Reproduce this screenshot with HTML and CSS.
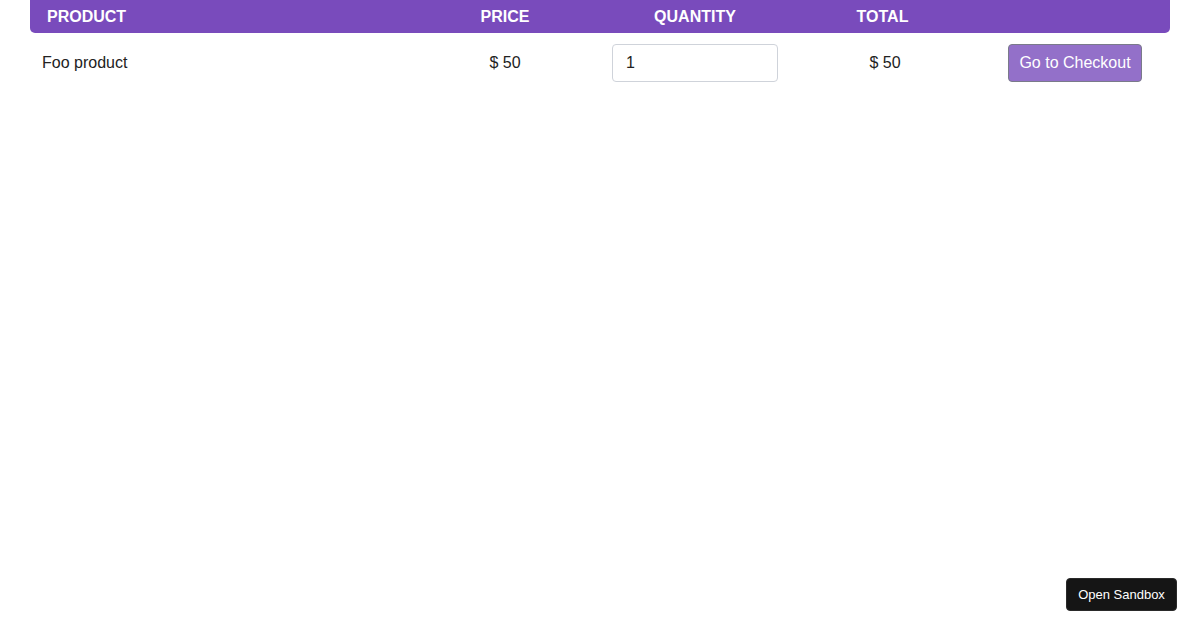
FILE: index.html
```html
<!DOCTYPE html>
<html>
<head>
<meta charset="utf-8">
<link rel="stylesheet" href="styles.css">
</head>
<body>
<div class="cart">
  <div class="head">
    <div class="h-product">PRODUCT</div>
    <div class="h-center">PRICE</div>
    <div class="h-center">QUANTITY</div>
    <div class="h-center h-total">TOTAL</div>
    <div class="h-center"></div>
  </div>
  <div class="row">
    <div class="c-product">Foo product</div>
    <div class="c-center">$ 50</div>
    <div class="c-qty"><input class="qty" type="text" value="1"></div>
    <div class="c-center">$ 50</div>
    <div class="c-center"><button class="checkout">Go to Checkout</button></div>
  </div>
</div>
<button class="sandbox">Open Sandbox</button>
</body>
</html>
```
FILE: styles.css
```css
html, body {
  margin: 0;
  padding: 0;
  background: #fff;
  font-family: "Liberation Sans", Arial, sans-serif;
  color: #222;
}
.cart {
  margin: 0 30px;
  width: 1140px;
}
.head, .row {
  display: grid;
  grid-template-columns: 380px 190px 190px 190px 190px;
  align-items: center;
}
.head {
  height: 33px;
  background: #794bbc;
  border-radius: 0 0 5px 5px;
  color: #fff;
  font-weight: bold;
  font-size: 16px;
}
.h-product {
  padding-left: 17px;
}
.h-center {
  text-align: center;
}
.h-total {
  padding-right: 5px;
}
.row {
  height: 58px;
  padding-top: 1px;
  font-size: 16px;
}
.c-product {
  padding-left: 12px;
}
.c-center {
  text-align: center;
}
.c-qty {
  padding: 0 12px;
}
.qty {
  box-sizing: border-box;
  width: 166px;
  height: 38px;
  border: 1px solid #cfd3da;
  border-radius: 4px;
  padding: 0 13px;
  font-family: "Liberation Sans", Arial, sans-serif;
  font-size: 16px;
  color: #222;
  outline: none;
}
.checkout {
  box-sizing: border-box;
  width: 134px;
  height: 38px;
  background: #9370c9;
  color: #fff;
  border: 1px solid #7a7a8a;
  border-radius: 4px;
  font-family: "Liberation Sans", Arial, sans-serif;
  font-size: 16px;
  padding: 0;
}
.sandbox {
  position: fixed;
  right: 23px;
  bottom: 19px;
  width: 111px;
  height: 33px;
  background: #151515;
  color: #fff;
  border: 1px solid #2a2a2a;
  border-radius: 4px;
  font-family: "Liberation Sans", Arial, sans-serif;
  font-size: 13px;
  padding: 0;
}
```
